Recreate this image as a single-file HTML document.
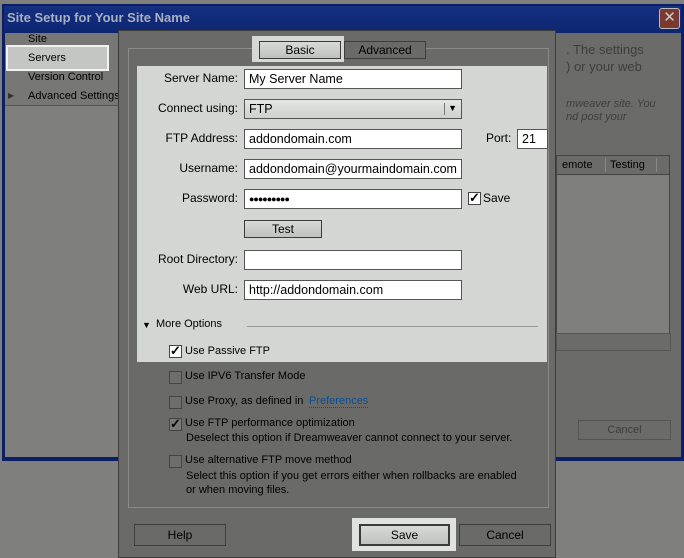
<!DOCTYPE html>
<html><head><meta charset="utf-8"><style>
*{box-sizing:border-box;margin:0;padding:0}
body{width:684px;height:558px;background:#7f807d;font-family:"Liberation Sans",sans-serif;font-size:11px;color:#000;position:relative;overflow:hidden}
.a{position:absolute}
.inp{position:absolute;background:#fff;border:1px solid #555;height:20px;padding:2px 4px;font-size:12.5px;white-space:nowrap}
.lbl{position:absolute;right:446px;font-size:12px;text-align:right}
.btn{position:absolute;border:1px solid #3a3a3a;background:linear-gradient(#d8dad7,#bfc1be);text-align:center;font-size:12px}
.dbtn{position:absolute;border:1px solid #3e3e3e;background:#6a6b68;text-align:center;font-size:12px;color:#000}
.cb{position:absolute;width:13px;height:13px;border:1px solid #444;background:#6e6f6c}
.cb.on{background:#e8e8e8}
.cb.on::after{content:"✓";position:absolute;left:0;top:-3px;font-size:13px;font-weight:bold;color:#000}
.t{position:absolute;white-space:nowrap}
</style></head><body>
<div class="a" style="left:2px;top:4px;width:682px;height:457px;background:#0a1f68"></div>
<div class="a" style="left:4px;top:6px;width:677px;height:27px;background:linear-gradient(#15307f,#0d2672)"></div>
<div class="t" style="left:7px;top:10px;font-size:13px;font-weight:bold;color:#a8b0c4">Site Setup for Your Site Name</div>
<div class="a" style="left:659px;top:8px;width:21px;height:21px;background:#7a3a30;border:1px solid #bbb;border-radius:3px;color:#ccc;font-size:15px;line-height:18px;text-align:center">✕</div>
<div class="a" style="left:5px;top:33px;width:676px;height:424px;background:#6b6c69"></div>
<div class="a" style="left:5px;top:33px;width:113px;height:424px;background:#7f807d"></div>
<div class="a" style="left:5px;top:33px;width:113px;height:73px;background:#777875"></div>
<div class="t" style="left:28px;top:33px">Site</div>
<div class="a" style="left:6px;top:45px;width:103px;height:26px;background:#c4c6c3;border:2px solid #f2f2f2"></div>
<div class="t" style="left:28px;top:52px">Servers</div>
<div class="t" style="left:28px;top:71px">Version Control</div>
<div class="t" style="left:8px;top:91px;font-size:8px;color:#333">▶</div>
<div class="t" style="left:28px;top:90px">Advanced Settings</div>
<div class="a" style="left:5px;top:105px;width:113px;height:1px;background:#555"></div>
<div class="t" style="left:566px;top:42px;font-size:13px;color:#3e3e3e">. The settings</div>
<div class="t" style="left:566px;top:59px;font-size:13px;color:#3e3e3e">) or your web</div>
<div class="t" style="left:566px;top:98px;font-style:italic;color:#3e3e3e">mweaver site. You</div>
<div class="t" style="left:566px;top:111px;font-style:italic;color:#3e3e3e">nd post your</div>
<div class="a" style="left:556px;top:155px;width:114px;height:196px;border:1px solid #444;background:#7f807d"></div>
<div class="a" style="left:556px;top:155px;width:114px;height:20px;border:1px solid #444;background:#6b6c69"></div>
<div class="t" style="left:562px;top:159px">emote</div>
<div class="a" style="left:605px;top:158px;width:1px;height:14px;background:#888"></div>
<div class="t" style="left:610px;top:159px">Testing</div>
<div class="a" style="left:656px;top:158px;width:1px;height:14px;background:#888"></div>
<div class="a" style="left:556px;top:333px;width:115px;height:18px;border:1px solid #555;background:#6b6c69"></div>
<div class="a" style="left:578px;top:420px;width:93px;height:20px;border:1px solid #555;text-align:center;line-height:18px;color:#3e3e3e">Cancel</div>
<div class="a" style="left:118px;top:30px;width:438px;height:528px;background:#6a6b68;border:1px solid #3c3c3c"></div>
<div class="a" style="left:128px;top:48px;width:421px;height:460px;border:1px solid #8a8b88"></div>
<div class="a" style="left:252px;top:36px;width:92px;height:26px;background:#d6d8d5"></div>
<div class="btn" style="left:259px;top:41px;width:82px;height:18px;line-height:16px">Basic</div>
<div class="dbtn" style="left:344px;top:41px;width:82px;height:18px;line-height:16px">Advanced</div>
<div class="a" style="left:137px;top:66px;width:410px;height:296px;background:#d4d6d3"></div>
<div class="lbl" style="top:71px">Server Name:</div>
<div class="inp" style="left:244px;top:69px;width:218px">My Server Name</div>
<div class="lbl" style="top:101px">Connect using:</div>
<div class="inp" style="left:244px;top:99px;width:218px;background:linear-gradient(#e4e6e3,#cfd1ce)">FTP<span style="position:absolute;right:16px;top:3px;width:1px;height:12px;background:#777"></span><span style="position:absolute;right:4px;top:3px;font-size:9px">▼</span></div>
<div class="lbl" style="top:131px">FTP Address:</div>
<div class="inp" style="left:244px;top:129px;width:218px">addondomain.com</div>
<div class="t" style="left:486px;top:131px;font-size:12px">Port:</div>
<div class="inp" style="left:517px;top:129px;width:31px">21</div>
<div class="lbl" style="top:161px">Username:</div>
<div class="inp" style="left:244px;top:159px;width:218px">addondomain@yourmaindomain.com</div>
<div class="lbl" style="top:191px">Password:</div>
<div class="inp" style="left:244px;top:189px;width:218px;font-size:9px;letter-spacing:-1px;line-height:14px">●●●●●●●●●</div>
<div class="cb on" style="left:468px;top:192px;background:#fff"></div>
<div class="t" style="left:483px;top:191px;font-size:12px">Save</div>
<div class="btn" style="left:244px;top:220px;width:78px;height:18px;line-height:16px">Test</div>
<div class="lbl" style="top:252px">Root Directory:</div>
<div class="inp" style="left:244px;top:250px;width:218px"></div>
<div class="lbl" style="top:282px">Web URL:</div>
<div class="inp" style="left:244px;top:280px;width:218px">http://addondomain.com</div>
<div class="t" style="left:142px;top:320px;font-size:9px">▼</div>
<div class="t" style="left:156px;top:318px">More Options</div>
<div class="a" style="left:247px;top:326px;width:291px;height:1px;background:#999"></div>
<div class="cb on" style="left:169px;top:345px;background:#fff"></div>
<div class="t" style="left:185px;top:345px">Use Passive FTP</div>
<div class="cb" style="left:169px;top:371px"></div>
<div class="t" style="left:185px;top:370px">Use IPV6 Transfer Mode</div>
<div class="cb" style="left:169px;top:396px"></div>
<div class="t" style="left:185px;top:395px">Use Proxy, as defined in</div>
<div class="t" style="left:309px;top:395px;color:#0a4f96;border-bottom:1px dotted #0a4f96">Preferences</div>
<div class="cb on" style="left:169px;top:418px;background:#7a7b78"></div>
<div class="t" style="left:185px;top:417px">Use FTP performance optimization</div>
<div class="t" style="left:186px;top:432px">Deselect this option if Dreamweaver cannot connect to your server.</div>
<div class="cb" style="left:169px;top:455px"></div>
<div class="t" style="left:185px;top:454px">Use alternative FTP move method</div>
<div class="t" style="left:186px;top:470px">Select this option if you get errors either when rollbacks are enabled</div>
<div class="t" style="left:186px;top:484px">or when moving files.</div>
<div class="dbtn" style="left:134px;top:524px;width:92px;height:22px;line-height:20px">Help</div>
<div class="a" style="left:352px;top:518px;width:104px;height:33px;background:#e0e2df"></div>
<div class="btn" style="left:359px;top:524px;width:91px;height:22px;line-height:18px;border:2px solid #3a3a3a">Save</div>
<div class="dbtn" style="left:459px;top:524px;width:92px;height:22px;line-height:20px">Cancel</div>
</body></html>
